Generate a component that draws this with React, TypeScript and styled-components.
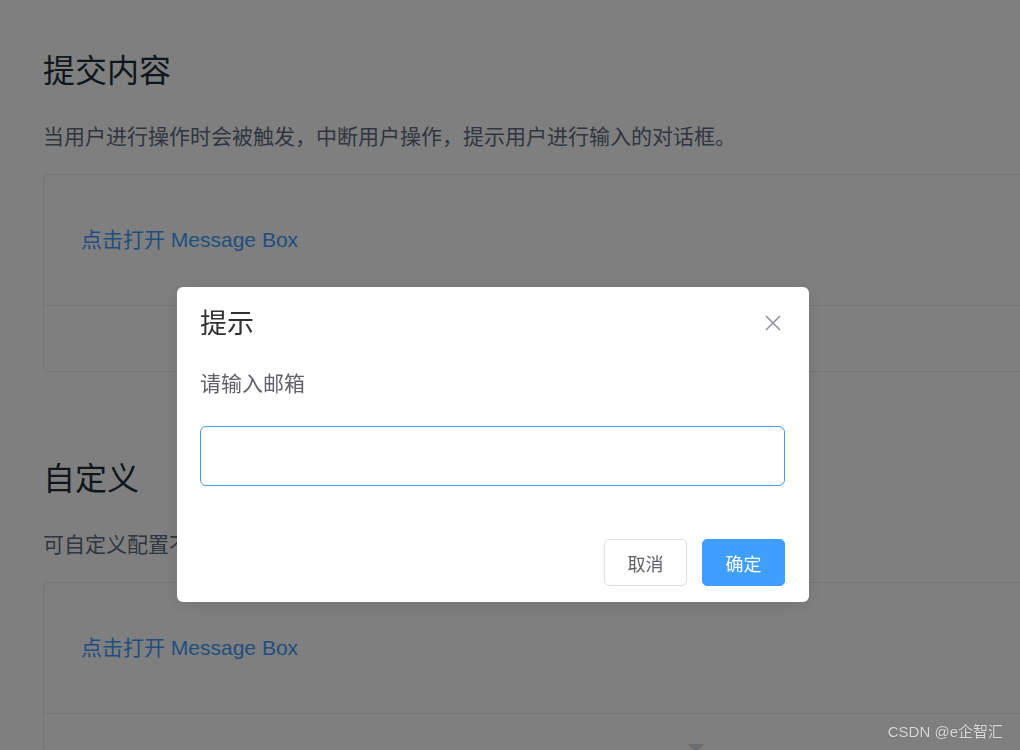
import { useState } from "react";
import styled, { createGlobalStyle } from "styled-components";

const GlobalStyle = createGlobalStyle`
  html, body {
    margin: 0;
    padding: 0;
    background: #fff;
    overflow: hidden;
  }
  body {
    font-family: "Liberation Sans", "Noto Sans CJK SC", sans-serif;
  }
`;

const Page = styled.div`
  width: 1400px;
  padding: 47px 0 0 43px;
  box-sizing: border-box;
`;

const Section = styled.section`
  margin-bottom: 83px;
`;

const Heading = styled.h3`
  margin: 0;
  font-size: 32px;
  line-height: 48px;
  font-weight: 400;
  color: #1f2f3d;
`;

const Desc = styled.p`
  margin: 27px 0 22px;
  font-size: 21px;
  line-height: 30px;
  color: #5e6d82;
`;

const DemoBlock = styled.div`
  width: 1304px;
  border: 1px solid #ebebeb;
  border-radius: 5px;
`;

const DemoSource = styled.div`
  padding: 50px 0 50px 37px;
  border-bottom: 1px solid #ebebeb;
`;

const TextLink = styled.a`
  font-size: 21px;
  line-height: 30px;
  color: #409eff;
  text-decoration: none;
  cursor: pointer;
`;

const DemoControl = styled.div`
  height: 65px;
  display: flex;
  align-items: center;
  justify-content: center;
`;

const Caret = styled.span`
  width: 0;
  height: 0;
  margin-top: 4px;
  border-left: 8px solid transparent;
  border-right: 8px solid transparent;
  border-top: 9px solid #d3dce6;
`;

const Mask = styled.div`
  position: fixed;
  inset: 0;
  background: rgba(0, 0, 0, 0.5);
  display: flex;
  align-items: flex-start;
  padding: 287px 0 0 177px;
  box-sizing: border-box;
`;

const Box = styled.div`
  width: 632px;
  box-sizing: border-box;
  background: #fff;
  border-radius: 6px;
  box-shadow: 0 3px 18px rgba(0, 0, 0, 0.1);
  padding: 23px 24px 16px 23px;
  display: flex;
  flex-direction: column;
`;

const Header = styled.div`
  height: 26px;
  display: flex;
  align-items: center;
  justify-content: space-between;
`;

const Title = styled.span`
  font-size: 27px;
  line-height: 26px;
  padding-top: 2px;
  color: #303133;
`;

const CloseBtn = styled.button`
  border: 0;
  background: none;
  padding: 0;
  margin-right: 4px;
  width: 16px;
  height: 16px;
  display: flex;
  cursor: pointer;
  color: #909399;
`;

const Message = styled.p`
  margin: 33px 0 0;
  font-size: 21px;
  line-height: 30px;
  color: #606266;
`;

const Input = styled.input`
  margin-top: 27px;
  height: 60px;
  box-sizing: border-box;
  width: 100%;
  border: 1px solid #409eff;
  border-radius: 6px;
  padding: 0 22px;
  font-size: 21px;
  font-family: inherit;
  color: #606266;
  outline: none;
`;

const Footer = styled.div`
  margin-top: 53px;
  display: flex;
  justify-content: flex-end;
  gap: 15px;
`;

const Button = styled.button<{ $primary?: boolean }>`
  width: 83px;
  height: 47px;
  box-sizing: border-box;
  border-radius: 5px;
  font-family: inherit;
  font-size: 18px;
  cursor: pointer;
  border: 1px solid ${(p) => (p.$primary ? "#409eff" : "#dcdfe6")};
  background: ${(p) => (p.$primary ? "#409eff" : "#fff")};
  color: ${(p) => (p.$primary ? "#fff" : "#606266")};
`;

const Watermark = styled.span`
  position: fixed;
  right: 17px;
  bottom: 9px;
  font-size: 15px;
  color: #dcdcdc;
  text-shadow: 0 0 1px rgba(0, 0, 0, 0.35);
`;

const demos = [
  {
    title: "提交内容",
    desc: "当用户进行操作时会被触发，中断用户操作，提示用户进行输入的对话框。",
  },
  {
    title: "自定义",
    desc: "可自定义配置不同内容。",
  },
];

export default function App() {
  const [email, setEmail] = useState("");
  return (
    <>
      <GlobalStyle />
      <Page>
        {demos.map((d) => (
          <Section key={d.title}>
            <Heading>{d.title}</Heading>
            <Desc>{d.desc}</Desc>
            <DemoBlock>
              <DemoSource>
                <TextLink>点击打开 Message Box</TextLink>
              </DemoSource>
              <DemoControl>
                <Caret />
              </DemoControl>
            </DemoBlock>
          </Section>
        ))}
      </Page>
      <Mask>
        <Box>
          <Header>
            <Title>提示</Title>
            <CloseBtn aria-label="关闭">
              <svg width="16" height="16" viewBox="0 0 16 16">
                <path
                  d="M1 1L15 15M15 1L1 15"
                  stroke="currentColor"
                  strokeWidth="1.6"
                  fill="none"
                />
              </svg>
            </CloseBtn>
          </Header>
          <Message>请输入邮箱</Message>
          <Input value={email} onChange={(e) => setEmail(e.target.value)} />
          <Footer>
            <Button>取消</Button>
            <Button $primary>确定</Button>
          </Footer>
        </Box>
      </Mask>
      <Watermark>CSDN @e企智汇</Watermark>
    </>
  );
}
